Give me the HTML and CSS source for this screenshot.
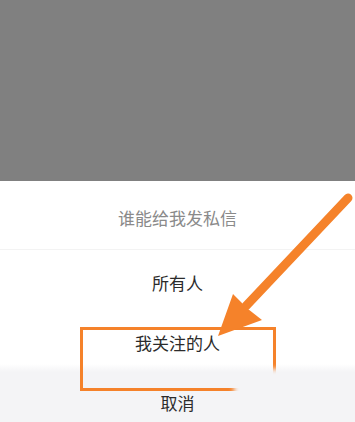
FILE: index.html
```html
<!DOCTYPE html>
<html lang="zh-CN">
<head>
<meta charset="utf-8">
<title>谁能给我发私信</title>
<link rel="stylesheet" href="styles.css">
</head>
<body>
<div class="page">
  <div class="mask"></div>
  <div class="sheet">
    <div class="sheet-title">谁能给我发私信</div>
    <div class="option option-all">所有人</div>
    <div class="option option-follow">我关注的人</div>
    <div class="cancel">取消</div>
  </div>
  <svg class="annotation" width="355" height="422" viewBox="0 0 355 422" xmlns="http://www.w3.org/2000/svg">
    <defs>
      <filter id="soft" x="-50%" y="-50%" width="200%" height="200%">
        <feGaussianBlur stdDeviation="2.5"/>
      </filter>
      <mask id="erase" maskUnits="userSpaceOnUse" x="0" y="0" width="355" height="422">
        <rect x="0" y="0" width="355" height="422" fill="#ffffff"/>
        <rect x="234" y="369" width="80" height="60" fill="#000000" filter="url(#soft)"/>
      </mask>
    </defs>
    <rect x="81.5" y="328.5" width="193" height="61" fill="none" stroke="#f5822a" stroke-width="3" mask="url(#erase)"/>
    <line x1="348" y1="198" x2="246" y2="306" stroke="#f5822a" stroke-width="9" stroke-linecap="round"/>
    <polygon points="218,336 233,294 248,309 262,320" fill="#f5822a"/>
  </svg>
</div>
</body>
</html>
```

FILE: styles.css
```css
html, body {
  margin: 0;
  padding: 0;
}

body {
  width: 355px;
  height: 422px;
  overflow: hidden;
  font-family: "Noto Sans CJK SC", "Noto Sans", sans-serif;
  background: #ffffff;
}

.page {
  position: relative;
  width: 355px;
  height: 422px;
  display: flex;
  flex-direction: column;
}

.mask {
  height: 181px;
  background: #808080;
  flex: none;
}

.sheet {
  flex: 1;
  display: flex;
  flex-direction: column;
  background: #ffffff;
}

.sheet-title {
  height: 69px;
  padding-top: 4px;
  box-sizing: border-box;
  display: flex;
  align-items: center;
  justify-content: center;
  font-size: 17px;
  color: #8a8a8a;
  border-bottom: 1px solid #f3f3f3;
}

.option {
  display: flex;
  align-items: center;
  justify-content: center;
  font-size: 17px;
  color: #2b2b2b;
}

.option-all {
  height: 64px;
}

.option-follow {
  height: 50px;
  padding-top: 6px;
  box-sizing: border-box;
}

.cancel {
  flex: 1;
  display: flex;
  align-items: center;
  justify-content: center;
  padding-top: 18px;
  font-size: 17px;
  color: #2b2b2b;
  background: linear-gradient(#ffffff, #f4f4f6 8px);
}

.annotation {
  position: absolute;
  left: 0;
  top: 0;
  pointer-events: none;
}
```
